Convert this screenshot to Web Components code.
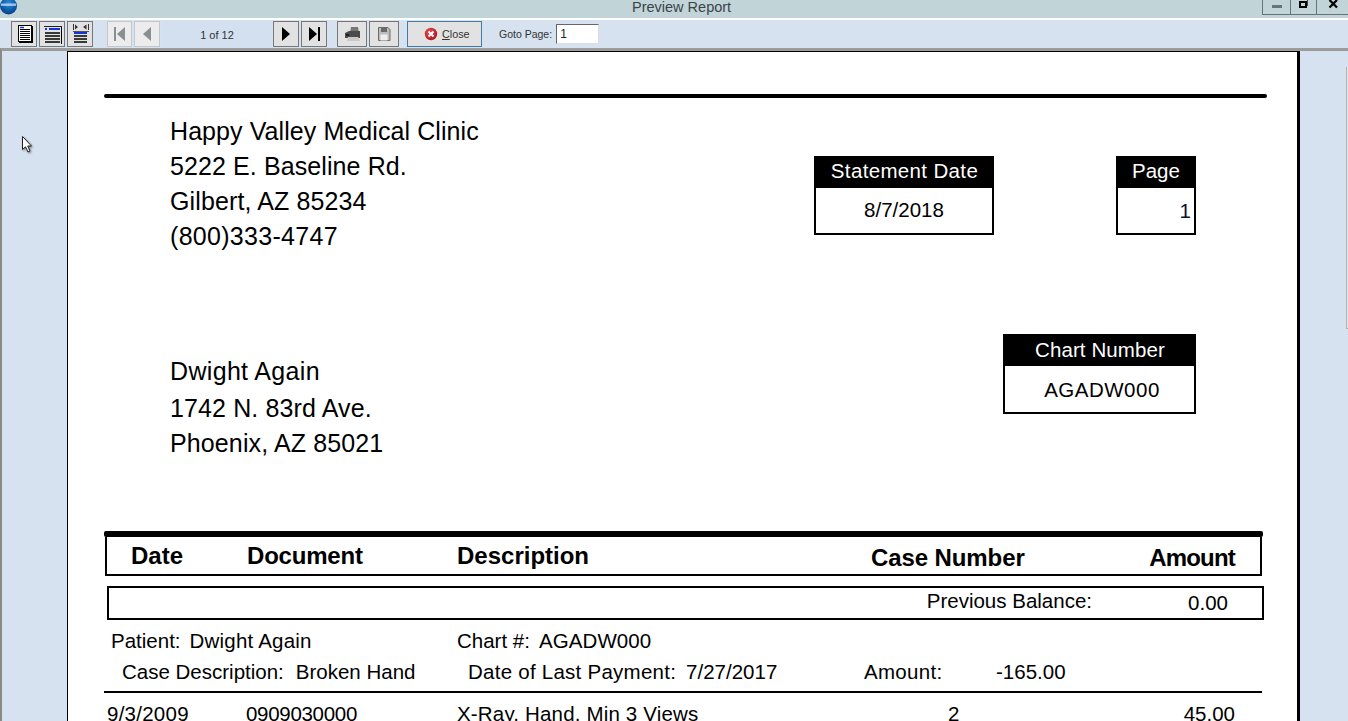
<!DOCTYPE html>
<html><head><meta charset="utf-8">
<style>
html,body{margin:0;height:721px;overflow:hidden;background:#d6e2f0;font-family:"Liberation Sans",Arial,sans-serif}
</style></head><body>
<preview-app></preview-app>
<script>
const def=(name,html)=>{customElements.define(name,class extends HTMLElement{constructor(){super();this.attachShadow({mode:'open'}).innerHTML=html;}});};

def('title-bar',`<style>
:host{display:flex;height:18px;background:#c1d4d8;overflow:hidden;align-items:flex-start}
.logo{width:18px;height:18px;margin-top:-3px;flex:none}
.t{margin-left:614px;margin-top:-1px;font-size:14.500px;line-height:17px;color:#3a4448}
.btns{display:flex;height:14px;border:1px solid #66757a;border-top:0;border-right:0;margin-left:auto}
.b{display:flex;align-items:flex-start;justify-content:center}
.b+.b{border-left:1px solid #66757a}
svg{display:block}
</style>
<svg class="logo" viewBox="0 0 18 18"><defs><radialGradient id="g" cx=".5" cy=".35" r=".7"><stop offset="0" stop-color="#2f8fd8"/><stop offset=".6" stop-color="#0d5aa8"/><stop offset="1" stop-color="#083a78"/></radialGradient></defs><circle cx="8.500" cy="9" r="8.500" fill="url(#g)"/><rect x="1" y="6.500" width="15" height="2.400" fill="#cfe2f5" opacity=".75"/></svg>
<span class="t">Preview Report</span>
<div class="btns">
<div class="b" style="width:27px"><svg width="12" height="14"><rect x="1" y="5" width="10" height="3" fill="#66757a"/></svg></div>
<div class="b" style="width:25px"><svg width="14" height="14"><path d="M3 2h6v5H3z" fill="none" stroke="#000" stroke-width="2"/><path d="M10.500 0v6" stroke="#444"/></svg></div>
<div class="b" style="width:31px"><svg width="14" height="14" style="margin-left:3px"><path d="M2.500 0L10 7.500M10 0L2.500 7.500" stroke="#000" stroke-width="2.200"/></svg></div>
</div>`);

def('tool-btn',`<style>
:host{display:flex;width:var(--bw,26px);height:26px;box-sizing:border-box;border:1px solid #777;background:#e2e2e2;align-items:center;justify-content:center;flex:none}
:host([disabled]){border-color:#c4c8cc;background:#ececec}
::slotted(svg){display:block}
</style><slot></slot>`);

def('close-btn',`<style>
:host{display:flex;width:75px;height:26px;box-sizing:border-box;border:1px solid #3f7cab;background:#e2e2e2;align-items:center;gap:4px;padding-left:16px;font-size:10.800px;color:#333;flex:none}
svg{display:block}
</style><svg width="14" height="14" viewBox="0 0 14 14"><defs><radialGradient id="r" cx=".4" cy=".35" r=".7"><stop offset="0" stop-color="#ee5050"/><stop offset="1" stop-color="#b01018"/></radialGradient></defs><circle cx="7" cy="7" r="6.200" fill="url(#r)"/><path d="M4.500 4.500L9.500 9.500M9.500 4.500L4.500 9.500" stroke="#fff" stroke-width="2"/></svg><span><u>C</u>lose</span>`);

def('page-field',`<style>
:host{display:flex;width:110px;height:27px;align-items:center;justify-content:center;font-size:11px;color:#333;background:#d2e0ef;box-sizing:border-box;flex:none}
</style><slot></slot>`);

def('goto-page',`<style>
:host{display:flex;align-items:center;font-size:10.500px;color:#333;gap:4px;flex:none;height:26px}
.i{width:43px;height:20px;box-sizing:border-box;background:#fff;border:1px solid #ddd;border-top:1px solid #666;border-left:1px solid #666;font-size:12px;line-height:18px;padding-left:3px;color:#222}
</style><span>Goto Page:</span><div class="i">1</div>`);

def('tool-bar',`<style>
:host{display:flex;height:30px;box-sizing:border-box;background:#d6e2f0;border-top:2px solid #fff;padding:1px 0 0 11px;align-items:flex-start}
.g{display:flex;gap:2px;align-items:flex-start}
</style>
<div class="g" style="margin-right:14px">
<tool-btn><svg width="20" height="22" viewBox="0 0 20 22"><rect x="4.500" y="2.500" width="13" height="16" fill="#fff" stroke="#000"/><path d="M18.500 3v17M5 19.500h14" stroke="#000"/><path d="M6 4.500h4" stroke="#1434e0" stroke-width="1.500"/><path d="M6 6.500h10M6 8.500h10M6 10.500h10M6 12.500h10M6 14.500h10M6 16.500h10" stroke="#000"/></svg></tool-btn>
<tool-btn><svg width="20" height="22" viewBox="0 0 20 22"><path d="M2 3.500h18" stroke="#222"/><path d="M3 6h2M7 6h11" stroke="#1434e0" stroke-width="2"/><path d="M19.500 4v17" stroke="#000"/><path d="M3 10h15M3 13h15M3 16h15M3 19h15" stroke="#000" stroke-width="1.500"/></svg></tool-btn>
<tool-btn><svg width="20" height="22" viewBox="0 0 20 22"><path d="M3.500 1v6M18.500 1v6" stroke="#333"/><path d="M8 4L5 1.500v5zM13 4L16.500 1.500v5z" fill="#333"/><path d="M4 10h13" stroke="#1434e0" stroke-width="2"/><path d="M3 8.500h16" stroke="#555"/><path d="M4 13h13M4 16h13M4 19h13" stroke="#000" stroke-width="1.500"/></svg></tool-btn>
</div>
<div class="g">
<tool-btn disabled style="--bw:25px"><svg width="16" height="18" viewBox="0 0 16 18"><path d="M2 2h2v14H2zM13 2v14L5 9z" fill="#8a8f93"/></svg></tool-btn>
<tool-btn disabled><svg width="16" height="18" viewBox="0 0 16 18"><path d="M12 2v14L4 9z" fill="#8a8f93"/></svg></tool-btn>
<page-field>1 of 12</page-field>
</div>
<div class="g" style="margin-left:1px">
<tool-btn><svg width="16" height="18" viewBox="0 0 16 18"><path d="M4 2v14L12 9z" fill="#000"/></svg></tool-btn>
<tool-btn><svg width="16" height="18" viewBox="0 0 16 18"><path d="M3 2v14L11 9zM12 2h2v14h-2z" fill="#000"/></svg></tool-btn>
</div>
<div class="g" style="margin-left:10px">
<tool-btn style="--bw:30px"><svg width="20" height="18" viewBox="0 0 20 18"><path d="M9 2h7l1 6H8z" fill="#777"/><path d="M3 8l4-2h11v7H3z" fill="#4a4a4a"/><path d="M6 12h10l2 4H5z" fill="#c8c8c8"/><path d="M4 9h3v2H4z" fill="#222"/></svg></tool-btn>
<tool-btn style="--bw:30px"><svg width="18" height="18" viewBox="0 0 18 18"><path d="M3.500 2.500h9.500l2 2v11H3.500z" fill="#bdbdbd" stroke="#6a6a6a"/><rect x="6" y="3" width="6" height="4" fill="#6a6a6a"/><rect x="5.500" y="9.500" width="7" height="6" fill="#efefef"/></svg></tool-btn>
</div>
<close-btn style="margin-left:8px"></close-btn>
<goto-page style="margin-left:17px"></goto-page>`);

def('stat-box',`<style>
:host{display:block;box-sizing:border-box;border:2px solid #000;background:#fff;flex:none;width:var(--w);height:var(--h)}
.h{background:#000;color:#fff;height:30px;font-size:20.500px;line-height:var(--hl,26px);text-align:center;letter-spacing:var(--hs,0);padding-left:var(--hp,0);box-sizing:border-box}
.v{font-size:20.500px;text-align:center;line-height:var(--lh,44px);color:#000;letter-spacing:var(--vs,0);padding-left:var(--vl,0)}
</style><div class="h"><slot name="head"></slot></div><div class="v"><slot></slot></div>`);

def('rep-rule',`<style>
:host{display:block;background:#000;border-radius:2px}
</style>`);

def('report-page',`<style>
:host{display:block;box-sizing:border-box;width:1233px;height:670px;background:#fff;border-top:1px solid #000;border-left:1px solid #000;border-right:3px solid #000;padding:42px 0 0 36px;color:#000;font-size:20.500px;overflow:hidden;flex:none}
.sec{display:flex;justify-content:space-between;width:1163px;box-sizing:border-box;padding-right:71px}
.s1{height:220px;margin-top:16px}
.s2{height:197px}
.addr{padding-left:66px;font-size:25px;line-height:35px}
.addr div{white-space:nowrap}
.boxes{display:flex;gap:122px;margin-top:42px}
.grid{display:grid;align-items:center}
.th{box-sizing:border-box;width:1157px;height:39px;margin-left:1px;border:2px solid #000;border-top:0;font-weight:bold;font-size:24px;line-height:28px;grid-template-columns:116px 210px 414px 1fr auto;padding:0 25px 0 24px}
.th .lo{padding-top:4px}
.pb{display:flex;box-sizing:border-box;width:1157px;height:34px;margin:10px 0 0 3px;border:2px solid #000;justify-content:flex-end;padding-right:34px;align-items:center}
.pb .l{padding-bottom:5px}
.pb .a{width:136px;text-align:right;padding-bottom:1px}
.info{line-height:31px;width:1158px;grid-template-columns:var(--c);box-sizing:border-box}
.gap{margin-left:var(--g,6px)}
.data{line-height:28px;width:1158px;grid-template-columns:139px 211px 491px 1fr auto;padding:0 27px 0 3px;box-sizing:border-box;margin-top:7px}
</style>
<rep-rule style="width:1163px;height:4px"></rep-rule>
<div class="sec s1">
<div class="addr"><div style="letter-spacing:.08px">Happy Valley Medical Clinic</div><div style="letter-spacing:.1px">5222 E. Baseline Rd.</div><div style="letter-spacing:.12px">Gilbert, AZ 85234</div><div style="letter-spacing:.3px">(800)333-4747</div></div>
<div class="boxes">
<stat-box style="--w:180px;--h:79px;--hs:.35px;--hp:1px"><span slot="head">Statement Date</span>8/7/2018</stat-box>
<stat-box style="--w:80px;--h:79px"><span slot="head">Page</span><div style="text-align:right;padding:1px 3px 0 0;color:#101030">1</div></stat-box>
</div>
</div>
<div class="sec s2">
<div class="addr" style="margin-top:20px"><div style="letter-spacing:.33px">Dwight Again</div><div style="margin-top:2px;letter-spacing:.12px">1742 N. 83rd Ave.</div><div style="letter-spacing:.12px">Phoenix, AZ 85021</div></div>
<stat-box style="--w:193px;--h:80px;--hs:.1px;--hl:28px;--hp:1px;--lh:48px;--vs:.5px;--vl:5px"><span slot="head">Chart Number</span>AGADW000</stat-box>
</div>
<rep-rule style="width:1159px;height:6px"></rep-rule>
<div class="grid th"><span>Date</span><span style="letter-spacing:-.2px">Document</span><span>Description</span><span class="lo" style="letter-spacing:-.1px">Case Number</span><span class="lo" style="letter-spacing:-.8px">Amount</span></div>
<div class="pb"><span class="l">Previous Balance:</span><span class="a">0.00</span></div>
<div class="grid info" style="--c:346px 1fr;margin-top:5px;padding-left:7px"><span>Patient:<span class="gap" style="--g:9px;letter-spacing:.2px">Dwight Again</span></span><span>Chart #:<span class="gap" style="--g:9px;letter-spacing:.1px">AGADW000</span></span></div>
<div class="grid info" style="--c:346px 396px 132px 1fr;padding-left:18px"><span>Case Description:<span class="gap" style="--g:12px">Broken Hand</span></span><span><span style="letter-spacing:.25px">Date of Last Payment:</span><span class="gap" style="--g:10px">7/27/2017</span></span><span style="letter-spacing:.3px">Amount:</span><span>-165.00</span></div>
<rep-rule style="width:1158px;height:2px;margin-top:4px;border-radius:0"></rep-rule>
<div class="grid data"><span style="letter-spacing:.25px">9/3/2009</span><span style="letter-spacing:-.3px">0909030000</span><span style="letter-spacing:.17px">X-Ray, Hand, Min 3 Views</span><span>2</span><span>45.00</span></div>`);

def('report-view',`<style>
:host{display:flex;flex:1;background:#d6e2f0;border-top:3px solid #9c9c9c;border-left:2px solid #8a8a8a;padding-left:65px;overflow:hidden;position:relative}
.sb{flex:1;display:flex;flex-direction:column;align-items:flex-end;padding-top:16px}
.sb i{display:block;box-sizing:border-box;width:2px;height:262px;background:#e8e8e8;border-left:1px solid #aeb2b2;border-bottom:1px solid #aaa}
.cur{position:absolute;left:19px;top:85px;display:block;filter:drop-shadow(1px 1px 1px rgba(0,0,0,.45))}
</style>
<report-page></report-page>
<div class="sb"><i></i></div>
<svg class="cur" width="12" height="18" viewBox="0 0 12 18"><path d="M1.500 .5V13.500L4.500 10.800L7 16L9 15L6.700 10H10.500Z" fill="#fff" stroke="#222" stroke-width="1"/></svg>`);

def('preview-app',`<style>
:host{display:flex;flex-direction:column;width:1348px;height:721px;overflow:hidden}
</style>
<title-bar></title-bar><tool-bar></tool-bar><report-view></report-view>`);
</script>
</body></html>
